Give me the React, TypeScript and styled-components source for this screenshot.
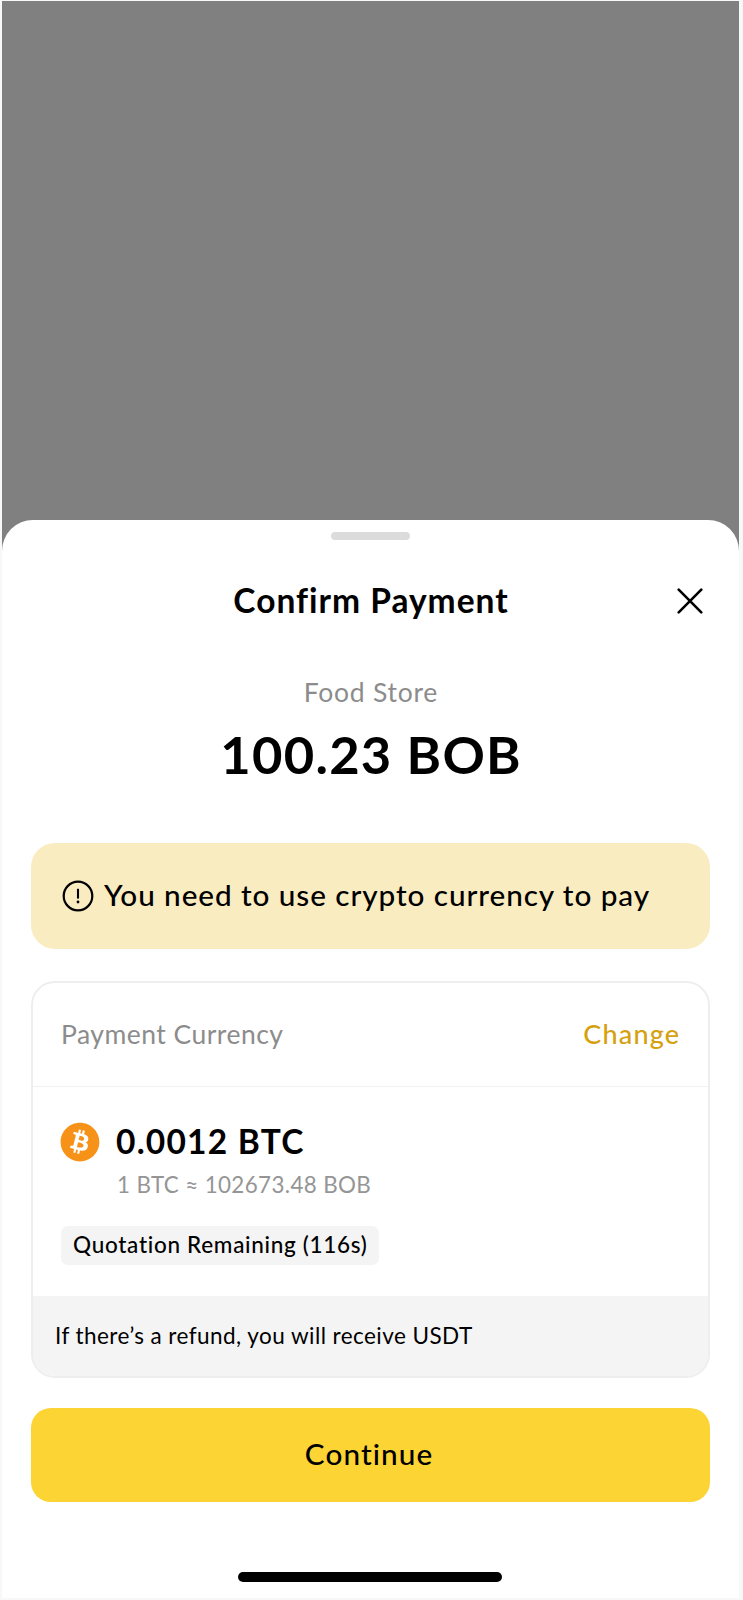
import React from 'react';
import styled, { createGlobalStyle } from 'styled-components';
import { FaBitcoin } from 'react-icons/fa';

const GlobalStyle = createGlobalStyle`
  *, *::before, *::after { box-sizing: border-box; }
  html, body { margin: 0; padding: 0; }
  body {
    background: #fafafa;
    font-family: Lato, 'Open Sans', sans-serif;
    color: #000;
    font-kerning: normal;
    font-variant-ligatures: none;
  }
`;

const Screen = styled.div`
  width: 743px;
  height: 1600px;
  padding: 1px 4px 2px 2px;
  background: #f8f8f8;
  overflow: hidden;
`;

const Backdrop = styled.div`
  display: flex;
  height: 1597px;
  padding-top: 519px;
  background: linear-gradient(#808080 0 600px, #fff 600px);
`;

const Sheet = styled.section`
  display: flex;
  flex-direction: column;
  align-items: center;
  width: 100%;
  padding: 12px 29px 16px;
  background: #fff;
  border-radius: 31px 31px 0 0;
`;

const Grabber = styled.div`
  flex: none;
  width: 79px;
  height: 8px;
  border-radius: 4px;
  background: #dcdcdc;
`;

type TextProps = {
  $size: number;
  $line: number;
  $weight?: number;
  $track?: number;
  $color?: string;
};

/* The negative end margin drops the tracking after the last glyph, so centred text stays centred. */
const Text = styled.span<TextProps>`
  display: block;
  flex: none;
  margin: 0 ${(p) => -(p.$track ?? 0)}px 0 0;
  font-size: ${(p) => p.$size}px;
  line-height: ${(p) => p.$line}px;
  font-weight: ${(p) => p.$weight ?? 400};
  letter-spacing: ${(p) => p.$track ?? 0}px;
  color: ${(p) => p.$color ?? '#000'};
  white-space: nowrap;
`;

const Header = styled.header`
  display: grid;
  grid-template-columns: 40px 1fr 40px;
  align-items: center;
  justify-items: center;
  width: 100%;
  height: 120px;
`;

const CloseButton = styled.button`
  grid-column: 3;
  display: flex;
  justify-content: center;
  width: 40px;
  padding: 2px 0 0;
  border: 0;
  background: none;
`;

const Summary = styled.div`
  display: flex;
  flex-direction: column;
  align-items: center;
  gap: 16px;
  padding: 16px 0 59px;
`;

const Notice = styled.div`
  display: flex;
  align-items: center;
  gap: 10px;
  width: 100%;
  height: 106px;
  padding: 0 31px;
  border-radius: 24px;
  background: #faecc1;
`;

const NoticeMessage = styled.div`
  padding-bottom: 2px;
`;

const Card = styled.div`
  width: 100%;
  height: 397px;
  margin-top: 32px;
  border: 2px solid #eeeeee;
  border-radius: 24px;
  overflow: hidden;
`;

const CardHeader = styled.div`
  display: flex;
  align-items: center;
  justify-content: space-between;
  height: 104px;
  padding: 0 29px 2px 28px;
  border-bottom: 1px solid #f1f1f1;
`;

const Quote = styled.div`
  display: grid;
  grid-template-columns: 40px auto;
  column-gap: 16px;
  justify-content: start;
  align-content: start;
  height: 209px;
  padding: 35px 27px 0;
`;

const CoinBadge = styled.div`
  display: flex;
  width: 40px;
  height: 40px;
  border-radius: 50%;
  background: radial-gradient(#fff 0 60%, transparent 61%);
  color: #f79219;
`;

const Rate = styled.div`
  grid-column: 2;
  padding: 9px 0 0 1px;
`;

const Countdown = styled.div`
  grid-column: 1 / 3;
  display: flex;
  justify-content: center;
  width: 318px;
  height: 39px;
  margin: 27px 0 0 1px;
  border-radius: 7px;
  background: #f4f4f4;
`;

const RefundNote = styled.div`
  height: 80px;
  padding: 21px 22px 0;
  background: #f4f4f4;
`;

const PrimaryButton = styled.button`
  display: flex;
  align-items: center;
  justify-content: center;
  width: 100%;
  height: 94px;
  margin-top: 30px;
  padding: 0 4px 2px 0;
  border: 0;
  border-radius: 20px;
  background: #fcd434;
  font-family: inherit;
`;

const HomeIndicator = styled.div`
  flex: none;
  width: 264px;
  height: 10px;
  margin-top: auto;
  margin-right: 2px;
  border-radius: 5px;
  background: #000;
`;

const CloseIcon = () => (
  <svg width="26" height="26" viewBox="0 0 26 26" fill="none" stroke="#000" strokeWidth="2.6" strokeLinecap="round">
    <path d="M1.7 1.7 24.3 24.3M24.3 1.7 1.7 24.3" />
  </svg>
);

const NoticeIcon = () => (
  <svg width="32" height="32" viewBox="0 0 32 32" fill="none">
    <circle cx="16" cy="16" r="14.3" stroke="#000" strokeWidth="2.2" />
    <path d="M16 8.8v9.8" stroke="#000" strokeWidth="2.1" />
    <circle cx="16" cy="22" r="1.4" fill="#000" />
  </svg>
);

export default function App() {
  return (
    <>
      <GlobalStyle />
      <Screen>
        <Backdrop>
          <Sheet>
            <Grabber />
            <Header>
              <span />
              <Text as="h1" $size={33.5} $line={40} $weight={700} $track={1}>Confirm Payment</Text>
              <CloseButton aria-label="Close"><CloseIcon /></CloseButton>
            </Header>
            <Summary>
              <Text $size={26.5} $line={32} $track={0.75} $color="#8c8c8c">Food Store</Text>
              <Text $size={52.5} $line={60} $weight={700} $track={1.25}>100.23 BOB</Text>
            </Summary>
            <Notice>
              <NoticeIcon />
              <NoticeMessage>
                <Text $size={29.7} $line={36} $weight={500} $track={0.93}>You need to use crypto currency to pay</Text>
              </NoticeMessage>
            </Notice>
            <Card>
              <CardHeader>
                <Text $size={26.5} $line={32} $track={0.48} $color="#8c8c8c">Payment Currency</Text>
                <Text $size={27} $line={32} $weight={500} $track={1.15} $color="#d6a10f">Change</Text>
              </CardHeader>
              <Quote>
                <CoinBadge><FaBitcoin size={40} /></CoinBadge>
                <Text $size={33.5} $line={38} $weight={700} $track={1.2}>0.0012 BTC</Text>
                <Rate><Text $size={22.4} $line={28} $track={0.36} $color="#959595">1 BTC ≈ 102673.48 BOB</Text></Rate>
                <Countdown><Text $size={22.5} $line={38} $weight={500} $track={0.7}>Quotation Remaining (116s)</Text></Countdown>
              </Quote>
              <RefundNote>
                <Text $size={22.5} $line={38} $track={0.44}>If there’s a refund, you will receive USDT</Text>
              </RefundNote>
            </Card>
            <PrimaryButton>
              <Text $size={29.7} $line={36} $weight={500} $track={1.1}>Continue</Text>
            </PrimaryButton>
            <HomeIndicator />
          </Sheet>
        </Backdrop>
      </Screen>
    </>
  );
}
